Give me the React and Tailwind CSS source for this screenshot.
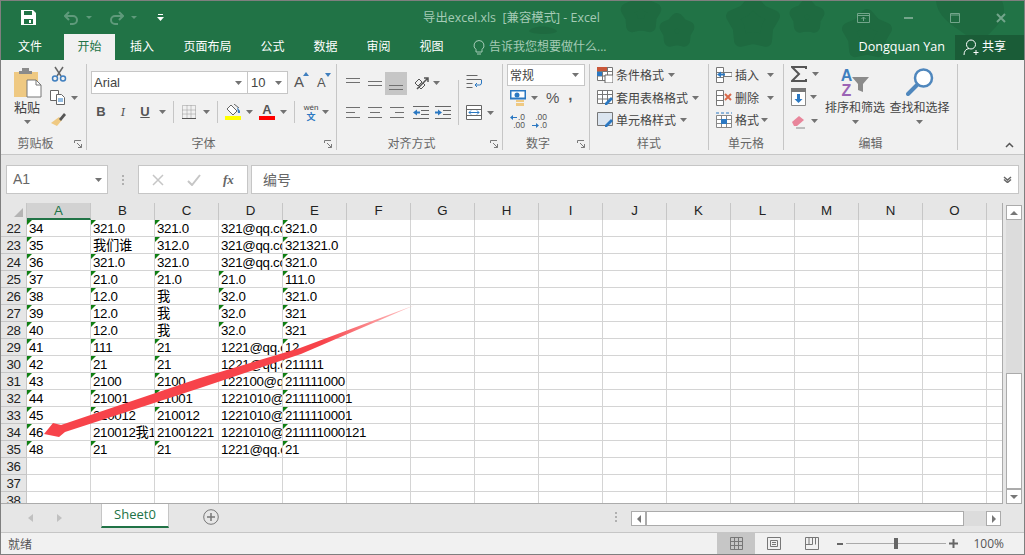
import React from "react";

const ui = "[font-family:'Open_Sans','Noto_Sans_CJK_SC',sans-serif]";
const arial = "[font-family:'Liberation_Sans','Noto_Sans_CJK_SC',sans-serif]";
const cjk = "[font-family:'Noto_Sans_CJK_SC',sans-serif]";

const columns = ["A", "B", "C", "D", "E", "F", "G", "H", "I", "J", "K", "L", "M", "N", "O", ""];

// text + "*" marks the green error triangle
const rows = [
  [22, "34*", "321.0*", "321.0*", "321@qq.com", "321.0*"],
  [23, "35*", "我们谁", "312.0*", "321@qq.com", "321321.0*"],
  [24, "36*", "321.0*", "321.0*", "321@qq.com", "321.0*"],
  [25, "37*", "21.0*", "21.0*", "21.0*", "111.0*"],
  [26, "38*", "12.0*", "我", "32.0*", "321.0*"],
  [27, "39*", "12.0*", "我", "32.0*", "321*"],
  [28, "40*", "12.0*", "我", "32.0*", "321*"],
  [29, "41*", "111*", "21*", "1221@qq.com", "12*"],
  [30, "42*", "21*", "21*", "1221@qq.com", "211111*"],
  [31, "43*", "2100*", "2100*", "122100@qq.com", "211111000*"],
  [32, "44*", "21001*", "21001*", "1221010@qq.com", "2111110001*"],
  [33, "45*", "210012*", "210012*", "1221010@qq.com", "2111110001*"],
  [34, "46*", "210012我121", "21001221", "1221010@qq.com", "211111000121*"],
  [35, "48*", "21*", "21*", "1221@qq.com", "21*"],
  [36],
  [37],
  [38],
];

const Caret = ({ className = "" }) => (
  <svg width="7" height="4" viewBox="0 0 7 4" className={`shrink-0 ${className}`}>
    <path d="M0 0h7L3.500 4z" fill="#737373" />
  </svg>
);

const Sep = ({ className = "" }) => <div className={`w-px bg-[#c6c6c6] shrink-0 ${className}`} />;

const Lines = ({ d, w = 16, h = 16 }) => (
  <svg width={w} height={h} viewBox={`0 0 ${w} ${h}`} className="shrink-0">
    <path d={d} stroke="#707070" strokeWidth="1" fill="none" />
  </svg>
);

const starPoints = (cx, cy, r) =>
  Array.from({ length: 10 }, (_, i) => {
    const a = (Math.PI / 5) * i - Math.PI / 2;
    const rad = i % 2 ? r * 0.68 : r;
    return `${cx + rad * Math.cos(a)},${cy + rad * Math.sin(a)}`;
  }).join(" ");

const TitleArt = () => (
  <svg width="1023" height="59" className="absolute left-0 top-0 pointer-events-none">
    {[
      [752, 22, 22],
      [806, 16, 12],
      [676, 30, 12],
      [640, 13, 15],
      [866, 34, 20],
    ].map(([x, y, r]) => (
      <polygon key={x} points={starPoints(x, y, r)} fill="#1e6a40" stroke="#1e6a40" strokeWidth="12" strokeLinejoin="round" />
    ))}
    <path d="M528 30c4-6 22-6 28 0 0 4-26 4-28 0zM935 0h66c6 14-2 22-14 34h-22c-10-8-28-16-30-34z" fill="#1e6a40" />
  </svg>
);

const TitleBar = () => (
  <div className="relative h-[33px] flex items-center">
    <svg width="15" height="15" viewBox="0 0 15 15" className="ml-[20px] shrink-0">
      <path d="M0 0h12l3 3v12H0z" fill="#fff" />
      <path d="M3 1h8v4H3zM3 9h9v5H3z" fill="#217346" />
      <path d="M8 10h2v3H8z" fill="#fff" />
    </svg>
    <svg width="15" height="14" viewBox="0 0 15 14" className="ml-[28px] shrink-0">
      <path d="M5 1L1 5l4 4M1 5h8a4 4 0 0 1 0 8H6" stroke="#5f9a7b" strokeWidth="2" fill="none" />
    </svg>
    <svg width="6" height="3" viewBox="0 0 6 3" className="ml-[7px] shrink-0">
      <path d="M0 0h6L3 3z" fill="#5f9a7b" />
    </svg>
    <svg width="15" height="14" viewBox="0 0 15 14" className="ml-[17px] shrink-0">
      <path d="M10 1l4 4-4 4M14 5H6a4 4 0 0 0 0 8h3" stroke="#5f9a7b" strokeWidth="2" fill="none" />
    </svg>
    <svg width="6" height="3" viewBox="0 0 6 3" className="ml-[7px] shrink-0">
      <path d="M0 0h6L3 3z" fill="#5f9a7b" />
    </svg>
    <svg width="7" height="7" viewBox="0 0 7 7" className="ml-[20px] shrink-0">
      <path d="M1 0h5v1H1zM0 3h7L3.500 7z" fill="#fff" />
    </svg>
    <div className={`absolute left-[422px] top-[8px] text-[12.4px] leading-[18px] text-[#a5cbb6] whitespace-pre ${ui}`}>
      导出excel.xls{"  "}[兼容模式] - Excel
    </div>
    <div className="ml-auto flex items-center relative">
      <svg width="13" height="10" viewBox="0 0 13 10">
        <path d="M.5.5h12v9H.5zM1 2.500h11M6.500 8V4M4.500 6l2-2 2 2" stroke="#73a58b" fill="none" />
      </svg>
      <div className="w-[9px] h-[2px] bg-[#73a58b] ml-[34px]" />
      <svg width="10" height="10" viewBox="0 0 10 10" className="ml-[37px]">
        <path d="M.5.5h9v9h-9zM1 2h8" stroke="#73a58b" strokeWidth="1" fill="none" />
      </svg>
      <svg width="10" height="10" viewBox="0 0 10 10" className="ml-[36px] mr-[18px]">
        <path d="M1 1l8 8M9 1L1 9" stroke="#73a58b" strokeWidth="2" />
      </svg>
    </div>
  </div>
);

const Tab = ({ w, active, children }) => (
  <div
    className={`h-[26px] flex items-center justify-center text-[12px] ${w} ${
      active ? "bg-[#f1f1f1] text-[#217346]" : "text-white"
    }`}
  >
    {children}
  </div>
);

const TabRow = () => (
  <div className={`relative h-[26px] flex items-center ${ui}`}>
    <Tab w="w-[63px] pr-[5px]">文件</Tab>
    <Tab w="w-[51px]" active>开始</Tab>
    <Tab w="w-[54px]">插入</Tab>
    <Tab w="w-[77px]">页面布局</Tab>
    <Tab w="w-[53px]">公式</Tab>
    <Tab w="w-[53px]">数据</Tab>
    <Tab w="w-[53px]">审阅</Tab>
    <Tab w="w-[53px]">视图</Tab>
    <svg width="12" height="15" viewBox="0 0 12 15" className="ml-[15px]">
      <path d="M6 .5a5 5 0 0 0-3 9V12h6V9.500a5 5 0 0 0-3-9zM4 14h4" stroke="#a5cbb6" fill="none" />
    </svg>
    <span className="ml-[4px] text-[12px] text-[#a5cbb6]">告诉我您想要做什么...</span>
    <span className="ml-auto text-[12.6px] text-white">Dongquan Yan</span>
    <div className="ml-[10px] w-[69px] h-[25px] bg-[#1a5c37] flex items-center pl-[8px] gap-[3px] text-white text-[12px]">
      <svg width="16" height="17" viewBox="0 0 16 17">
        <circle cx="8" cy="5.500" r="4.500" stroke="#fff" fill="none" />
        <path d="M1 16c0-4 2-6 5-6.500M10.500 13.500h5M13 11v5" stroke="#fff" fill="none" />
      </svg>
      共享
    </div>
  </div>
);

const Launcher = () => (
  <svg width="8" height="8" viewBox="0 0 8 8" className="absolute right-[4px] bottom-[2px]">
    <path d="M.5 3V.5H7M7.500 7.500L3 3M7.500 4v3.500H4" stroke="#7a7a7a" fill="none" />
  </svg>
);

const Group = ({ w, label, launcher, children }) => (
  <div className={`relative shrink-0 h-[86px] border-r border-[#c6c6c6] flex flex-col ${w}`}>
    <div className="h-[71px] flex">{children}</div>
    <div className={`h-[15px] flex items-center justify-center text-[12px] leading-[16px] text-[#666] ${launcher ? "pr-[16px]" : ""}`}>
      {label}
    </div>
    {launcher && <Launcher />}
  </div>
);

const ClipboardGroup = () => (
  <Group w="w-[86px]" label="剪贴板" launcher>
    <div className="w-[49px] pl-[12px] flex flex-col items-start">
      <svg width="29" height="30" viewBox="0 0 29 30" className="mt-[4px]">
        <path d="M1 4h24v25H1z" fill="#efc982" />
        <path d="M9 0h7v3h3v3H6V3h3z" fill="#8b8b8b" />
        <path d="M14 12h9l5 5v12H14z" fill="#fff" stroke="#777" />
        <path d="M23 12v5h5" stroke="#777" fill="none" />
      </svg>
      <span className="text-[13px] leading-[16px] mt-[1px] ml-[1px] text-[#444]">粘贴</span>
      <Caret className="ml-[11px] mt-[5px]" />
    </div>
    <div className="flex flex-col">
      <svg width="16" height="16" viewBox="0 0 16 16" className="ml-[1px] mt-[2px]">
        <path d="M4 1l6 9M12 1L6 10" stroke="#666" strokeWidth="1.500" fill="none" />
        <circle cx="4" cy="12.500" r="2.500" fill="none" stroke="#3f7fbf" strokeWidth="1.500" />
        <circle cx="12" cy="12.500" r="2.500" fill="none" stroke="#3f7fbf" strokeWidth="1.500" />
      </svg>
      <div className="flex items-center mt-[8px] gap-[2px]">
        <svg width="16" height="15" viewBox="0 0 16 15">
          <path d="M.5.5h8v10h-8z" fill="#fff" stroke="#666" />
          <path d="M6.500 4.500h5l3 3v7h-8z" fill="#fff" stroke="#666" />
          <path d="M8 9h5M8 11h5" stroke="#2b78c2" />
        </svg>
        <Caret className="ml-[3px]" />
      </div>
      <svg width="16" height="16" viewBox="0 0 16 16" className="mt-[7px]">
        <path d="M9 5l3 3-5 6-6-3z" fill="#efc982" />
        <path d="M9 7l5-6 2 2-5 6z" fill="#555" />
      </svg>
    </div>
  </Group>
);

const FontGroup = () => (
  <Group w="w-[250px]" label="字体" launcher>
    <div className="pl-[4px] pt-[7px] flex flex-col">
      <div className="flex items-center">
        <div className={`w-[157px] h-[23px] bg-white border border-[#c6c6c6] flex items-center pl-[2px] pr-[5px] text-[13px] text-[#444] ${arial}`}>
          Arial
          <Caret className="ml-auto" />
        </div>
        <div className={`w-[40px] h-[23px] bg-white border border-l-0 border-[#c6c6c6] flex items-center pl-[3px] pr-[5px] text-[13px] text-[#444] ${arial}`}>
          10
          <Caret className="ml-auto" />
        </div>
        <span className={`ml-[6px] relative text-[15px] text-[#555] ${arial}`}>
          A
          <svg width="6" height="4" viewBox="0 0 6 4" className="absolute -right-[5px] top-[1px]">
            <path d="M3 0l3 4H0z" fill="#3f7fbf" />
          </svg>
        </span>
        <span className={`ml-[13px] relative text-[13px] text-[#555] ${arial}`}>
          A
          <svg width="6" height="4" viewBox="0 0 6 4" className="absolute -right-[5px] top-[0px]">
            <path d="M0 0h6L3 4z" fill="#3f7fbf" />
          </svg>
        </span>
      </div>
      <div className="flex items-center h-[22px] mt-[7px]">
        <span className={`w-[14px] ml-[3px] text-[13px] font-bold text-[#555] text-center ${arial}`}>B</span>
        <span className="w-[14px] ml-[8px] text-[13px] italic font-serif text-[#555] text-center">I</span>
        <span className={`w-[14px] ml-[8px] text-[13px] font-bold underline text-[#555] text-center ${arial}`}>U</span>
        <Caret className="ml-[7px]" />
        <Sep className="h-[22px] ml-[7px]" />
        <svg width="14" height="14" viewBox="0 0 14 14" className="ml-[8px]">
          <path d="M.5.5h13v13H.5zM.5 5h13M.5 9h13M5 .5v13M9 .5v13" stroke="#999" strokeDasharray="1 1" fill="none" />
          <path d="M0 13.500h14" stroke="#555" />
        </svg>
        <Caret className="ml-[7px]" />
        <Sep className="h-[22px] ml-[7px]" />
        <div className="ml-[7px] w-[16px]">
          <svg width="16" height="12" viewBox="0 0 16 12">
            <path d="M6 1l6 6-4 4-6-6zM9 0l5 4" stroke="#666" fill="#fff" />
            <path d="M12 3l3 4v2h-2z" fill="#3f7fbf" />
          </svg>
          <div className="h-[4px] bg-[#ffff00]" />
        </div>
        <Caret className="ml-[5px]" />
        <div className="ml-[6px] w-[16px] text-center">
          <div className={`text-[13px] leading-[12px] font-bold text-[#555] ${arial}`}>A</div>
          <div className="h-[4px] bg-[#ff0000]" />
        </div>
        <Caret className="ml-[5px]" />
        <Sep className="h-[22px] ml-[7px]" />
        <div className="ml-[8px] w-[16px] flex flex-col items-center">
          <span className={`text-[8px] leading-[9px] text-[#444] ${arial}`}>wén</span>
          <span className="text-[9px] leading-[10px] text-[#2b78c2] font-bold">文</span>
        </div>
        <Caret className="ml-[3px]" />
      </div>
    </div>
  </Group>
);

const AlignGroup = () => (
  <Group w="w-[166px]" label="对齐方式" launcher>
    <div className="pl-[8px] flex flex-col w-[121px] shrink-0">
      <div className="flex items-center h-[24px] mt-[7px]">
        <Lines d="M1 3.500h14M1 7.500h14" />
        <div className="w-[6px]" />
        <Lines d="M1 6.500h14M1 10.500h14" />
        <div className="w-[2px]" />
        <div className="w-[22px] h-[23px] bg-[#c6c6c6] flex items-center justify-center">
          <Lines d="M1 10.500h14M1 14.500h14" />
        </div>
        <svg width="17" height="17" viewBox="0 0 17 17" className="ml-[7px]">
          <path d="M3 14L14 3M10 3h4v4" stroke="#555" strokeWidth="1.500" fill="none" />
          <path d="M1 8l4-4 3 3-4 4zM5 12l4-4 2 2-4 4z" stroke="#555" fill="none" />
        </svg>
        <Caret className="ml-[2px]" />
      </div>
      <div className="flex items-center h-[16px] mt-[9px]">
        <Lines d="M1 3.500h14M1 8.500h9M1 13.500h14" />
        <div className="w-[6px]" />
        <Lines d="M1 3.500h14M3 8.500h10M1 13.500h14" />
        <div className="w-[6px]" />
        <Lines d="M1 3.500h14M6 8.500h9M1 13.500h14" />
        <svg width="16" height="15" viewBox="0 0 16 15" className="ml-[8px]">
          <path d="M0 1.500h16M8 5.500h8M8 9.500h8M0 13.500h16" stroke="#666" fill="none" />
          <path d="M0 7.500l4-3v2h3v2H4v2z" fill="#2b78c2" />
        </svg>
        <svg width="16" height="15" viewBox="0 0 16 15" className="ml-[6px]">
          <path d="M0 1.500h16M8 5.500h8M8 9.500h8M0 13.500h16" stroke="#666" fill="none" />
          <path d="M7 7.500l-4-3v2H0v2h3v2z" fill="#2b78c2" />
        </svg>
      </div>
    </div>
    <Sep className="h-[45px] mt-[16px]" />
    <div className="pl-[7px] flex flex-col">
      <svg width="17" height="17" viewBox="0 0 17 17" className="mt-[10px]">
        <path d="M.5 1.500h11M.5 5.500h15M.5 9.500h6M.5 13.500h6" stroke="#666" fill="none" />
        <path d="M15.500 6v3a2 2 0 0 1-2 2H9M11 9l-2 2 2 2" stroke="#2b78c2" fill="none" />
      </svg>
      <div className="flex items-center mt-[14px]">
        <svg width="16" height="15" viewBox="0 0 16 15">
          <path d="M.5.5h15v14H.5zM.5 4.500h15M.5 10.500h15" stroke="#666" fill="#fff" />
          <path d="M3 7.500h10M3 7.500l2-2M3 7.500l2 2M13 7.500l-2-2M13 7.500l-2 2" stroke="#2b78c2" fill="none" />
        </svg>
        <Caret className="ml-[5px]" />
      </div>
    </div>
  </Group>
);

const NumberGroup = () => (
  <Group w="w-[87px]" label="数字" launcher>
    <div className="pl-[4px] flex flex-col">
      <div className="w-[78px] h-[22px] bg-white border border-[#c6c6c6] flex items-center pl-[2px] pr-[5px] text-[12px] text-[#444]">
        常规
        <Caret className="ml-auto" />
      </div>
      <div className="flex items-center h-[18px] mt-[3px] pl-[3px]">
        <svg width="16" height="17" viewBox="0 0 16 17">
          <path d="M.5.5h15v8H.5z" fill="#fff" stroke="#2b78c2" strokeWidth="2" />
          <circle cx="7" cy="5" r="2.500" fill="#2b78c2" />
          <path d="M6 10h8v2H6zM6 13h8v3H6z" fill="#efc982" />
        </svg>
        <Caret className="ml-[5px]" />
        <span className={`ml-[8px] text-[15px] text-[#555] ${arial}`}>%</span>
        <span className={`ml-[9px] mb-[8px] text-[15px] font-bold leading-[15px] text-[#555] ${arial}`}>,</span>
      </div>
      <div className={`flex items-center h-[16px] mt-[6px] pl-[3px] gap-[7px] text-[8.500px] leading-[8px] text-[#555] ${arial}`}>
        <div className="w-[15px] flex flex-col items-end">
          <span className="flex items-center"><svg width="7" height="5" viewBox="0 0 7 5" className="mr-[1px]"><path d="M0 2.500L3 0v2h4v1H3v2z" fill="#2b78c2" /></svg>.0</span>
          <span>.00</span>
        </div>
        <div className="w-[15px] flex flex-col items-end">
          <span>.00</span>
          <span className="flex items-center"><svg width="7" height="5" viewBox="0 0 7 5" className="mr-[1px]"><path d="M7 2.500L4 0v2H0v1h4v2z" fill="#2b78c2" /></svg>.0</span>
        </div>
      </div>
    </div>
  </Group>
);

const RowBtn = ({ icon, label, caretGap = "ml-[3px]" }) => (
  <div className="flex items-center h-[22.5px]">
    {icon}
    <span className="ml-[3px] text-[12px] text-[#444] whitespace-nowrap">{label}</span>
    <Caret className={caretGap} />
  </div>
);

const TableIcon = ({ children }) => (
  <svg width="16" height="16" viewBox="0 0 16 16" className="shrink-0">
    <path d="M.5.5h15v13H.5zM.5 4.500h15M.5 9h15M5.500.5v13M10.500.5v13" stroke="#777" fill="#fff" />
    {children}
  </svg>
);

const StylesGroup = () => (
  <Group w="w-[119px]" label="样式">
    <div className="pl-[7px] flex flex-col">
      <RowBtn
        label="条件格式"
        caretGap="ml-[4px]"
        icon={
          <TableIcon>
            <path d="M0 0h10v4H0z" fill="#c9583a" />
            <path d="M0 5h5v4H0z" fill="#2b78c2" />
            <path d="M8 8h8v8H8z" fill="#fff" stroke="#666" />
          </TableIcon>
        }
      />
      <RowBtn
        label="套用表格格式"
        caretGap="ml-[4px]"
        icon={
          <TableIcon>
            <path d="M8 13l6-6 2 2-6 6H8z" fill="#2b78c2" />
          </TableIcon>
        }
      />
      <RowBtn
        label="单元格样式"
        caretGap="ml-[4px]"
        icon={
          <svg width="16" height="16" viewBox="0 0 16 16" className="shrink-0">
            <path d="M.5.5h15v13H.5z" stroke="#777" fill="#dbe5f0" />
            <path d="M8 13l6-6 2 2-6 6H8z" fill="#2b78c2" />
          </svg>
        }
      />
    </div>
  </Group>
);

const CellsGroup = () => (
  <Group w="w-[75px]" label="单元格">
    <div className="pl-[7px] flex flex-col">
      <RowBtn
        label="插入"
        caretGap="ml-[8px]"
        icon={
          <svg width="16" height="16" viewBox="0 0 16 16" className="shrink-0">
            <path d="M.5.5h7v15h-7zM.5 5.500h7M.5 10.500h7M8 5.500h8v4H8z" stroke="#777" fill="#fff" />
            <path d="M1 7.500l4-3v2h4v2H5v2z" fill="#2b78c2" />
          </svg>
        }
      />
      <RowBtn
        label="删除"
        caretGap="ml-[8px]"
        icon={
          <svg width="16" height="16" viewBox="0 0 16 16" className="shrink-0">
            <path d="M.5.5h7v15h-7zM.5 5.500h7M.5 10.500h7" stroke="#777" fill="#fff" />
            <path d="M9 4l6 6M15 4l-6 6" stroke="#d9694a" strokeWidth="2" />
          </svg>
        }
      />
      <RowBtn
        label="格式"
        caretGap="ml-[2px]"
        icon={
          <svg width="16" height="16" viewBox="0 0 16 16" className="shrink-0">
            <path d="M.5 3.500h15v12H.5zM.5 7.500h15M.5 11.500h15M5.500 3.500v12M10.500 3.500v12" stroke="#888" fill="#fff" />
            <path d="M5 7h6v5H5z" fill="#2b78c2" />
            <path d="M0 1h16" stroke="#2b78c2" strokeDasharray="3 2" />
          </svg>
        }
      />
    </div>
  </Group>
);

const BigBtn = ({ w, icon, label }) => (
  <div className={`flex flex-col items-center shrink-0 ${w}`}>
    <div className="h-[29px] mt-[4px] flex items-start">{icon}</div>
    <span className="mt-[2px] text-[12px] leading-[16px] text-[#444] whitespace-nowrap">{label}</span>
    <Caret className="mt-[5px]" />
  </div>
);

const EditGroup = () => (
  <Group w="w-[174px]" label="编辑">
    <div className="pl-[7px] pt-[2px] flex flex-col w-[39px] shrink-0">
      <div className="flex items-center h-[16px]">
        <svg width="16" height="16" viewBox="0 0 16 16">
          <path d="M15 3V1H1l7 7-7 7h14v-2" stroke="#555" strokeWidth="2" fill="none" />
        </svg>
        <Caret className="ml-[5px]" />
      </div>
      <div className="flex items-center h-[18px] mt-[6px]">
        <svg width="15" height="18" viewBox="0 0 15 18">
          <path d="M.5.5h14v17H.5z" fill="#fff" stroke="#888" />
          <path d="M0 0h15v4H0z" fill="#777" />
          <path d="M7.500 15l-4-4h2.500V6h3v5h2.500z" fill="#2b78c2" />
        </svg>
        <Caret className="ml-[4px]" />
      </div>
      <div className="flex items-center h-[16px] mt-[7px]">
        <svg width="15" height="15" viewBox="0 0 15 15">
          <path d="M1 8l7-6 5 4-7 6H3z" fill="#e8859a" />
          <path d="M5 14h9" stroke="#888" />
        </svg>
        <Caret className="ml-[5px]" />
      </div>
    </div>
    <BigBtn
      w="w-[64px]"
      label="排序和筛选"
      icon={
        <div className="flex">
          <div className={`flex flex-col items-center text-[16px] leading-[15px] font-bold ${arial}`}>
            <span className="text-[#3f7fbf]">A</span>
            <span className="text-[#9b63b5]">Z</span>
          </div>
          <svg width="17" height="16" viewBox="0 0 17 16" className="mt-[8px]">
            <path d="M0 1h17l-6 7v8l-5-2V8z" fill="#8b8b8b" />
          </svg>
        </div>
      }
    />
    <BigBtn
      w="w-[65px]"
      label="查找和选择"
      icon={
        <svg width="28" height="28" viewBox="0 0 28 28">
          <circle cx="17.500" cy="10" r="8.500" stroke="#4f87bd" strokeWidth="2.500" fill="#fff" />
          <path d="M11 17L2 26" stroke="#4f87bd" strokeWidth="4" strokeLinecap="round" />
        </svg>
      }
    />
  </Group>
);

const Ribbon = () => (
  <div className={`relative h-[95px] bg-[#f1f1f1] border-b border-[#c6c6c6] pt-[4px] flex ${cjk}`}>
    <ClipboardGroup />
    <FontGroup />
    <AlignGroup />
    <NumberGroup />
    <StylesGroup />
    <CellsGroup />
    <EditGroup />
    <svg width="9" height="6" viewBox="0 0 9 6" className="absolute right-[10px] bottom-[6px]">
      <path d="M1 5l3.500-3.500L8 5" stroke="#555" strokeWidth="1.500" fill="none" />
    </svg>
  </div>
);

const FormulaBar = () => (
  <div className={`h-[48px] bg-[#e6e6e6] flex pt-[10px] pl-[5px] ${arial}`}>
    <div className="w-[102px] h-[29px] bg-white border border-[#c6c6c6] flex items-center pl-[6px] pr-[5px] text-[14px] text-[#666]">
      A1
      <Caret className="ml-auto" />
    </div>
    <div className="w-[30px] flex items-center justify-center h-[29px]">
      <div className="flex flex-col gap-[2px]">
        <div className="w-[2px] h-[2px] bg-[#b0b0b0]" />
        <div className="w-[2px] h-[2px] bg-[#b0b0b0]" />
        <div className="w-[2px] h-[2px] bg-[#b0b0b0]" />
      </div>
    </div>
    <div className="w-[110px] h-[29px] bg-white border border-[#c6c6c6] flex items-center pl-[13px]">
      <svg width="12" height="12" viewBox="0 0 12 12">
        <path d="M1 1l10 10M11 1L1 11" stroke="#c6c6c6" strokeWidth="1.500" />
      </svg>
      <svg width="14" height="12" viewBox="0 0 14 12" className="ml-[23px]">
        <path d="M1 7l4 4 8-10" stroke="#c6c6c6" strokeWidth="2" fill="none" />
      </svg>
      <span className="ml-[22px] [font-family:'Liberation_Serif',serif] italic font-bold text-[13px] text-[#666]">fx</span>
    </div>
    <div className={`ml-[3px] w-[768px] h-[29px] bg-white border border-[#c6c6c6] flex items-center pl-[11px] pr-[6px] text-[14px] text-[#666] ${cjk}`}>
      编号
      <svg width="9" height="7" viewBox="0 0 9 7" className="ml-auto">
        <path d="M1 1l3.500 3L8 1M1 3.500l3.500 3 3.500-3" stroke="#666" strokeWidth="1.500" fill="none" />
      </svg>
    </div>
  </div>
);

const Cell = ({ value = "", spill }) => {
  const flagged = value.endsWith("*");
  const text = flagged ? value.slice(0, -1) : value;
  return (
    <div
      className={`relative w-[64px] h-[17px] shrink-0 border-r border-b border-[#d4d4d4] pl-[2px] whitespace-nowrap text-[13.3px] tracking-[-0.3px] leading-[17px] text-black ${
        spill ? "z-10 overflow-visible" : "bg-white overflow-hidden"
      }`}
    >
      {text}
      {flagged && <div className="absolute left-0 top-0 w-[5px] h-[5px] bg-[#0f7f12] [clip-path:polygon(0_0,100%_0,0_100%)]" />}
    </div>
  );
};

const SheetGrid = () => (
  <div className={`relative w-[1002px] h-[301px] overflow-hidden bg-white border-r border-b border-[#ababab] ${arial}`}>
    <div className="flex h-[17px] bg-[#e6e6e6] text-[13.3px] leading-[16px] text-[#222]">
      <div className="relative w-[26px] shrink-0 border-r border-[#c6c6c6]">
        <div className="absolute right-[3px] bottom-[3px] w-[9px] h-[9px] bg-[#b4b4b4] [clip-path:polygon(100%_0,100%_100%,0_100%)]" />
      </div>
      {columns.map((c, i) => (
        <div
          key={c || "blank"}
          className={`w-[64px] shrink-0 text-center border-r border-[#c6c6c6] ${
            i === 0 ? "bg-[#d2d2d2] border-b-2 border-b-[#217346] text-[#217346]" : ""
          }`}
        >
          {c}
        </div>
      ))}
    </div>
    {rows.map(([num, ...cells]) => (
      <div key={num} className="flex">
        <div className="w-[26px] h-[17px] shrink-0 bg-[#e6e6e6] border-r border-b border-[#c6c6c6] text-center text-[13.3px] tracking-[-0.35px] leading-[17px] text-[#222]">
          {num}
        </div>
        {columns.map((_, i) => (
          <Cell key={i} value={cells[i]} spill={i === 4} />
        ))}
      </div>
    ))}
  </div>
);

const VScroll = () => (
  <div className="w-[21px] h-[301px] bg-[#e6e6e6] pl-[3px] flex flex-col">
    <div className="w-[16px] h-[15px] mt-[2px] bg-white border border-[#ababab] flex items-center justify-center">
      <svg width="8" height="4" viewBox="0 0 8 4"><path d="M4 0l4 4H0z" fill="#777" /></svg>
    </div>
    <div className="w-[16px] flex-1 bg-[#dcdcdc] flex flex-col justify-end">
      <div className="h-[116px] bg-white border border-[#ababab]" />
    </div>
    <div className="w-[16px] h-[15px] bg-white border border-[#ababab] flex items-center justify-center">
      <svg width="8" height="4" viewBox="0 0 8 4"><path d="M0 0h8L4 4z" fill="#777" /></svg>
    </div>
  </div>
);

const SheetBar = () => (
  <div className="h-[28px] bg-[#e6e6e6] flex items-start shrink-0">
    <svg width="5" height="8" viewBox="0 0 5 8" className="ml-[27px] mt-[10px]"><path d="M5 0v8L0 4z" fill="#c0c0c0" /></svg>
    <svg width="5" height="8" viewBox="0 0 5 8" className="ml-[24px] mt-[10px]"><path d="M0 0v8l5-4z" fill="#c0c0c0" /></svg>
    <div className={`ml-[39px] w-[68px] h-[25px] bg-white border-x border-[#c6c6c6] border-b-2 border-b-[#217346] -mt-px flex items-center justify-center text-[13px] text-[#217346] ${ui}`}>
      Sheet0
    </div>
    <svg width="16" height="16" viewBox="0 0 16 16" className="ml-[34px] mt-[5px]">
      <circle cx="8" cy="8" r="7.300" fill="none" stroke="#777" />
      <path d="M8 4v8M4 8h8" stroke="#777" strokeWidth="1.500" />
    </svg>
    <div className="ml-[396px] mt-[8px] flex flex-col gap-[2px]">
      <div className="w-[2px] h-[2px] bg-[#b0b0b0]" />
      <div className="w-[2px] h-[2px] bg-[#b0b0b0]" />
      <div className="w-[2px] h-[2px] bg-[#b0b0b0]" />
    </div>
    <div className="ml-[14px] mt-[7px] flex h-[15px] w-[370px]">
      <div className="w-[15px] bg-white border border-[#ababab] flex items-center justify-center">
        <svg width="4" height="8" viewBox="0 0 4 8"><path d="M4 0v8L0 4z" fill="#777" /></svg>
      </div>
      <div className="w-[318px] bg-white border border-[#ababab]" />
      <div className="flex-1 bg-[#dcdcdc]" />
      <div className="w-[15px] bg-white border border-[#ababab] flex items-center justify-center">
        <svg width="4" height="8" viewBox="0 0 4 8"><path d="M0 0v8l4-4z" fill="#777" /></svg>
      </div>
    </div>
  </div>
);

const StatusBar = () => (
  <div className={`h-[22px] bg-[#f1f1f1] border-t border-[#c6c6c6] flex items-center ${cjk}`}>
    <span className="ml-[7px] text-[12px] text-[#555]">就绪</span>
    <div className="ml-auto w-[38px] h-[21px] bg-[#c6c6c6] flex items-center justify-center">
      <svg width="13" height="13" viewBox="0 0 13 13">
        <path d="M.5.5h12v12H.5zM.5 4.500h12M.5 8.500h12M4.500.5v12M8.500.5v12" stroke="#777" fill="none" />
      </svg>
    </div>
    <svg width="14" height="13" viewBox="0 0 14 13" className="ml-[12px]">
      <path d="M.5.5h13v12H.5zM3.500 3.500h7v6h-7zM5 5.500h4M5 7.500h4" stroke="#777" fill="none" />
    </svg>
    <svg width="14" height="13" viewBox="0 0 14 13" className="ml-[24px]">
      <path d="M.5.5h13v12H.5zM.5 7.500h7M4 .5v7M7.500.5v7M10.500.5v7" stroke="#777" fill="none" />
    </svg>
    <div className="ml-[18px] w-[6px] h-[2px] bg-[#666]" />
    <div className="ml-[3px] relative w-[100px] h-px bg-[#aaa] flex items-center justify-center">
      <div className="w-[4px] h-[11px] bg-[#666]" />
    </div>
    <svg width="9" height="9" viewBox="0 0 9 9" className="ml-[3px]">
      <path d="M4.500 0v9M0 4.500h9" stroke="#666" strokeWidth="2" />
    </svg>
    <span className={`ml-[15px] mr-[20px] text-[12px] text-[#555] ${ui}`}>100%</span>
  </div>
);

const Annotation = () => (
  <svg width="1023" height="553" className="absolute left-0 top-0 pointer-events-none z-20">
    <defs>
      <linearGradient id="fade" x1="0" y1="0" x2="1" y2="0">
        <stop offset="0" stopColor="#f7434a" />
        <stop offset="0.75" stopColor="#f7434a" />
        <stop offset="1" stopColor="#fcc" />
      </linearGradient>
    </defs>
    <path d="M43 433L52 422L60 424L199 377L299 347L414 304L300 353L199 387L64 431L58 436z" fill="url(#fade)" />
  </svg>
);

export default function App() {
  return (
    <div className="relative w-[1025px] h-[555px] overflow-hidden border border-[#7f7f7f] bg-[#e6e6e6]">
      <div className="relative h-[59px] bg-[#217346]">
        <TitleArt />
        <div className="relative">
          <TitleBar />
          <TabRow />
        </div>
      </div>
      <Ribbon />
      <FormulaBar />
      <div className="flex">
        <SheetGrid />
        <VScroll />
      </div>
      <SheetBar />
      <StatusBar />
      <Annotation />
    </div>
  );
}
